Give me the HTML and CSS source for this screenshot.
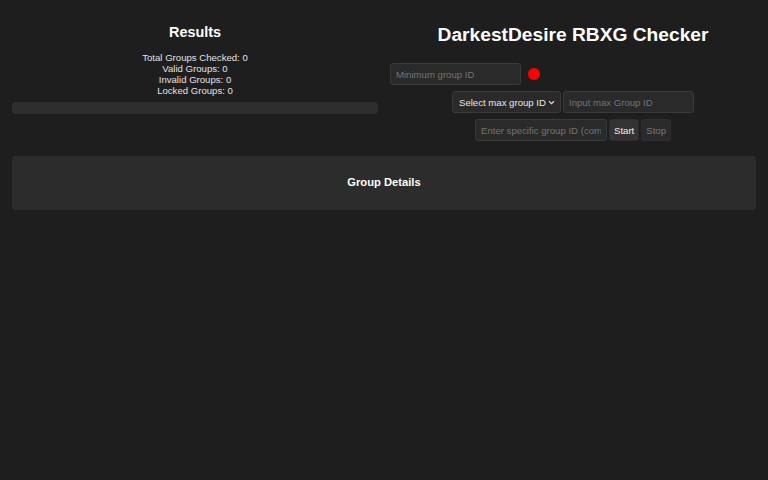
FILE: index.html
```html
<!DOCTYPE html>
<html lang="en">
<head>
<meta charset="utf-8">
<title>DarkestDesire RBXG Checker</title>
<link rel="stylesheet" href="styles.css">
</head>
<body>
<div class="top">
  <section class="results">
    <h2 class="results-title">Results</h2>
    <div class="stats">
      <div>Total Groups Checked: 0</div>
      <div>Valid Groups: 0</div>
      <div>Invalid Groups: 0</div>
      <div>Locked Groups: 0</div>
    </div>
    <div class="progress"><div class="progress-fill"></div></div>
  </section>
  <section class="checker">
    <h1 class="title">DarkestDesire RBXG Checker</h1>
    <div class="row row-left">
      <input class="field field-min" type="text" placeholder="Minimum group ID">
      <span class="status-dot"></span>
    </div>
    <div class="row">
      <select class="select">
        <option>Select max group ID</option>
      </select>
      <input class="field field-max" type="text" placeholder="Input max Group ID">
    </div>
    <div class="row">
      <input class="field field-specific" type="text" placeholder="Enter specific group ID (comma separated)">
      <button class="btn btn-start">Start</button>
      <button class="btn btn-stop" disabled>Stop</button>
    </div>
  </section>
</div>
<section class="details">
  <h3 class="details-title">Group Details</h3>
</section>
</body>
</html>
```
FILE: styles.css
```css
html, body {
  margin: 0;
  background: #1e1e1e;
}
body {
  padding: 12px;
  color: #ffffff;
  font-family: "Liberation Sans", Arial, sans-serif;
}
.top {
  display: grid;
  grid-template-columns: 1fr 1fr;
  gap: 12px;
}
.results {
  text-align: center;
}
.results-title {
  margin: 12px 0 11px;
  font-size: 14.4px;
  line-height: 17px;
  font-weight: bold;
}
.stats {
  font-size: 9.6px;
  line-height: 11px;
  color: #e2e2e2;
}
.progress {
  margin-top: 6px;
  height: 12px;
  border-radius: 4px;
  background: #2e2e2e;
  overflow: hidden;
}
.progress-fill {
  width: 0;
  height: 100%;
  background: #4caf50;
}
.checker {
  display: flex;
  flex-direction: column;
  gap: 6px;
}
.title {
  margin: 12px 0 11px;
  text-align: center;
  font-size: 19.2px;
  line-height: 22px;
  font-weight: bold;
}
.row {
  display: flex;
  justify-content: center;
  align-items: center;
  gap: 2px;
}
.row-left {
  justify-content: flex-start;
  gap: 7px;
}
.field, .select, .btn {
  box-sizing: border-box;
  height: 22px;
  margin: 0;
  font-family: "Liberation Sans", Arial, sans-serif;
  font-size: 9.6px;
  border: 1px solid #3a3a3a;
  border-radius: 3px;
  background: #2a2a2a;
  color: #e0e0e0;
}
.field {
  padding: 0 5px;
}
.field::placeholder {
  color: #747474;
}
.field-min { width: 131px; }
.field-max { width: 131px; }
.field-specific { width: 132px; }
.select {
  width: 109px;
  padding: 0 14px 0 6px;
  color: #e8e8e8;
  -webkit-appearance: none;
  appearance: none;
  background-image: url("data:image/svg+xml;utf8,<svg xmlns='http://www.w3.org/2000/svg' width='8' height='6' viewBox='0 0 8 6'><path d='M1 1.5 L4 4.5 L7 1.5' fill='none' stroke='%23e0e0e0' stroke-width='1.4'/></svg>");
  background-repeat: no-repeat;
  background-position: right 5px center;
  background-size: 7px 5px;
}
.status-dot {
  width: 12px;
  height: 12px;
  border-radius: 50%;
  background: #ff0000;
}
.btn {
  padding: 0 4px;
  border-color: #2e2e2e;
  background: #333333;
  color: #f0f0f0;
}
.btn-stop {
  background: #2a2a2a;
  color: #7a7a7a;
}
.details {
  margin-top: 15px;
  height: 54px;
  display: flex;
  align-items: center;
  justify-content: center;
  border-radius: 4px;
  background: #2c2c2c;
}
.details-title {
  margin: 0 0 1px;
  font-size: 11.2px;
  line-height: 13px;
  font-weight: bold;
}
```
